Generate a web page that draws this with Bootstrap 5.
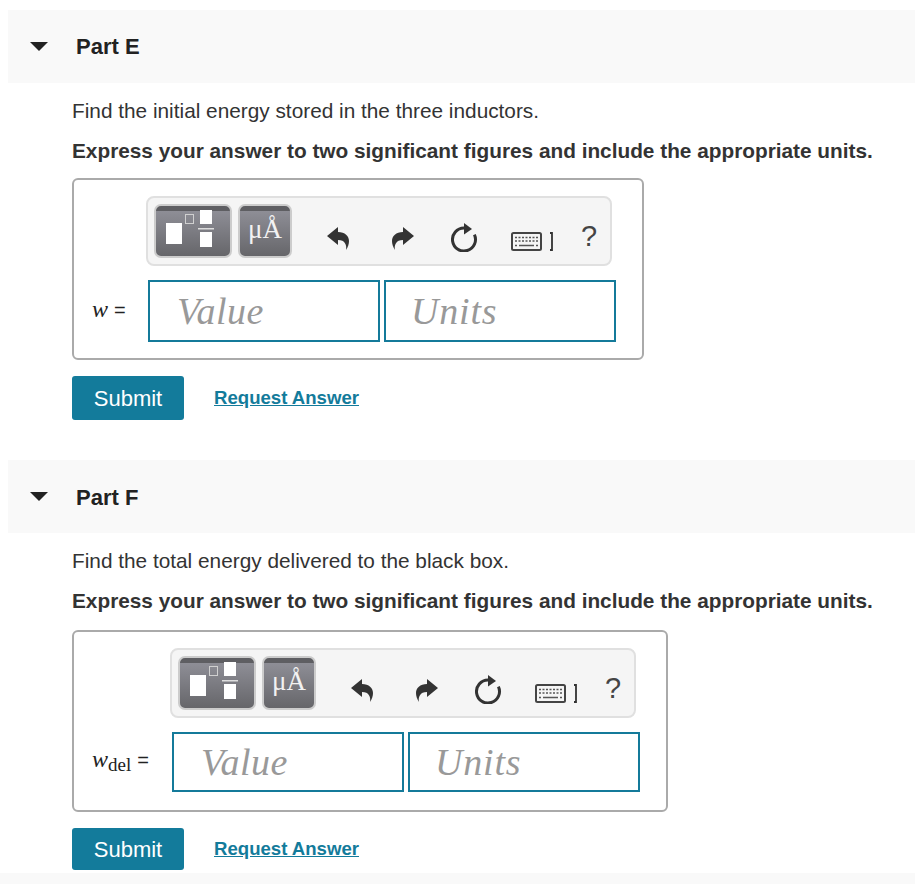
<!DOCTYPE html>
<html lang="en">
<head>
  <meta charset="UTF-8" />
  <meta name="viewport" content="width=device-width, initial-scale=1.0"/>
  <title>Part E and F</title>
  <link href="https://cdn.jsdelivr.net/npm/bootstrap@5.3.3/dist/css/bootstrap.min.css" rel="stylesheet"/>
  <style>
    body {
      font-family: "Liberation Sans", Arial, sans-serif;
      font-size: 20.8px;
      color: #333;
      background: #fff;
      padding: 10px 0 0 8px;
      margin: 0;
      overflow: hidden;
    }
    .part-head {
      height: 73px;
      background: #f9f9f9;
      padding-left: 22px;
    }
    .part-arrow {
      width: 0;
      height: 0;
      border-left: 9px solid transparent;
      border-right: 9px solid transparent;
      border-top: 9px solid #222;
      margin-right: 28px;
    }
    .part-title {
      font-size: 22px;
      font-weight: 700;
      color: #222;
    }
    .part-title.lower { padding-top: 2px; }
    .part-body { padding: 16px 0 0 64px; }
    .part-text { line-height: 24px; margin: 0 0 16px; }
    .part-ask { line-height: 24px; margin: 0 0 15px; font-weight: 700; }
    .part-ask.lower { margin-bottom: 17px; }
    .answer-box {
      border: 2px solid #aaa;
      border-radius: 6px;
      padding: 16px 26px 16px 18px;
      width: fit-content;
    }
    .answer-box.tall { padding-bottom: 18px; }
    .math-toolbar {
      position: relative;
      width: 466px;
      height: 70px;
      margin-bottom: 14px;
      padding: 6px 0 0 6px;
      border: 2px solid #e0e0e0;
      border-radius: 8px;
      background: #f5f5f5;
    }
    .bar-w { margin-left: 54px; }
    .bar-wdel { margin-left: 78px; }
    .tpl-btn {
      height: 54px;
      border: 2px solid #ccc;
      border-radius: 7px;
      background: linear-gradient(#5e5e62 0, #5e5e62 5px, #8e8e96 5px, #66666a 100%);
    }
    .tpl-frac { width: 78px; }
    .tpl-units {
      width: 54px;
      margin-left: 6px;
      color: #f2f2f2;
      font-family: "Liberation Serif", serif;
      font-size: 27px;
      line-height: 1;
      text-align: center;
      padding-top: 10px;
    }
    .tool-ico { position: absolute; display: block; }
    .tool-help {
      position: absolute;
      left: 433px;
      top: 24px;
      font-size: 29px;
      line-height: 1;
      color: #444;
    }
    .math-label {
      font-family: "Liberation Serif", serif;
      font-size: 19px;
      color: #222;
    }
    .math-label i { font-size: 24px; }
    .math-label sub { font-size: 19px; bottom: -4px; }
    .math-label span { font-family: "Liberation Sans", sans-serif; font-size: 20px; margin-left: 6px; }
    .label-w { width: 56px; padding-bottom: 4px; }
    .label-wdel { width: 80px; padding-bottom: 6px; }
    .math-field.form-control {
      width: 232px;
      height: 62px;
      border: 2px solid #147a9a;
      border-radius: 0;
      padding: 0 0 0 27px;
      font-family: "Liberation Serif", serif;
      font-style: italic;
      font-size: 38px;
      letter-spacing: .5px;
      box-shadow: none;
    }
    .math-field.units.form-control { padding-left: 25px; letter-spacing: .8px; }
    .math-field.short { height: 60px; }
    .math-field::placeholder { color: #999; opacity: 1; }
    .btn-submit.btn {
      width: 112px;
      height: 44px;
      padding: 0;
      font-size: 22px;
      background: #137b9b;
      border: 0;
      border-radius: 3px;
      color: #fff;
    }
    .btn-submit.short { height: 42px; }
    .req-link {
      font-size: 18.6px;
      font-weight: 700;
      color: #137b9b;
      margin-left: 30px;
    }
    .part-actions { margin-top: 16px; }
    .gap-e { height: 40px; }
    .foot-strip { height: 14px; margin-top: 3px; margin-left: -8px; background: #f9f9f9; }
  </style>
</head>
<body>

<svg width="0" height="0" class="position-absolute">
  <defs>
    <symbol id="ico-frac" viewBox="0 0 78 54">
      <rect x="12" y="19" width="16" height="21" fill="#fff"/>
      <rect x="31.500" y="10.500" width="8" height="9" fill="none" stroke="#d0d0d0"/>
      <rect x="46" y="6" width="12" height="14" fill="#fff"/>
      <rect x="44" y="24" width="16" height="1.500" fill="#ddd"/>
      <rect x="46" y="28" width="12" height="15" fill="#fff"/>
    </symbol>
    <symbol id="ico-undo" viewBox="0 0 22 25">
      <path d="M0 11 11 2V7C18 7 22 11 22 16 22 19 21 22 19 25 20 20 18 15 11 15V20Z" fill="#333"/>
    </symbol>
    <symbol id="ico-redo" viewBox="0 0 22 25">
      <path d="M22 11 11 2V7C4 7 0 11 0 16 0 19 1 22 3 25 2 20 4 15 11 15V20Z" fill="#333"/>
    </symbol>
    <symbol id="ico-reload" viewBox="0 0 28 30">
      <path d="M23.400 12.600A11.500 11.500 0 1 1 13 6" fill="none" stroke="#333" stroke-width="3"/>
      <path d="M13 1 21 7 13 12.500Z" fill="#333"/>
    </symbol>
    <symbol id="ico-keys" viewBox="0 0 44 20">
      <rect x="1" y="1" width="29" height="17" rx="1.500" fill="#f5f5f5" stroke="#444" stroke-width="2"/>
      <path d="M4 5.500H27M4 9H27" stroke="#555" stroke-width="1.500" stroke-dasharray="2 1.500"/>
      <path d="M4 13.500H6M8 13.500H23M25 13.500H27" stroke="#555" stroke-width="1.500"/>
      <path d="M39 1H41V18H39" fill="none" stroke="#333" stroke-width="1.800"/>
    </symbol>
  </defs>
</svg>

<section>
  <div class="part-head d-flex align-items-center">
    <span class="part-arrow"></span>
    <span class="part-title">Part E</span>
  </div>
  <div class="part-body">
    <p class="part-text">Find the initial energy stored in the three inductors.</p>
    <p class="part-ask">Express your answer to two significant figures and include the appropriate units.</p>
    <div class="answer-box">
      <div class="math-toolbar bar-w d-flex">
        <div class="tpl-btn tpl-frac"><svg width="74" height="50"><use href="#ico-frac" x="-2" y="-2" width="78" height="54"/></svg></div>
        <div class="tpl-btn tpl-units">μÅ</div>
        <svg class="tool-ico" style="left:179px;top:27px" width="22" height="25"><use href="#ico-undo"/></svg>
        <svg class="tool-ico" style="left:244px;top:27px" width="22" height="25"><use href="#ico-redo"/></svg>
        <svg class="tool-ico" style="left:303px;top:24px" width="28" height="30"><use href="#ico-reload"/></svg>
        <svg class="tool-ico" style="left:363px;top:34px" width="44" height="20"><use href="#ico-keys"/></svg>
        <span class="tool-help">?</span>
      </div>
      <div class="d-flex align-items-center">
        <div class="math-label label-w"><i>w</i><span>=</span></div>
        <input class="form-control math-field" placeholder="Value" aria-label="Value">
        <input class="form-control math-field units ms-1" placeholder="Units" aria-label="Units">
      </div>
    </div>
    <div class="part-actions d-flex align-items-center">
      <button class="btn btn-submit" type="button">Submit</button>
      <a class="req-link" href="#">Request Answer</a>
    </div>
  </div>
</section>

<div class="gap-e"></div>

<section>
  <div class="part-head d-flex align-items-center">
    <span class="part-arrow"></span>
    <span class="part-title lower">Part F</span>
  </div>
  <div class="part-body">
    <p class="part-text">Find the total energy delivered to the black box.</p>
    <p class="part-ask lower">Express your answer to two significant figures and include the appropriate units.</p>
    <div class="answer-box tall">
      <div class="math-toolbar bar-wdel d-flex">
        <div class="tpl-btn tpl-frac"><svg width="74" height="50"><use href="#ico-frac" x="-2" y="-2" width="78" height="54"/></svg></div>
        <div class="tpl-btn tpl-units">μÅ</div>
        <svg class="tool-ico" style="left:179px;top:27px" width="22" height="25"><use href="#ico-undo"/></svg>
        <svg class="tool-ico" style="left:244px;top:27px" width="22" height="25"><use href="#ico-redo"/></svg>
        <svg class="tool-ico" style="left:303px;top:24px" width="28" height="30"><use href="#ico-reload"/></svg>
        <svg class="tool-ico" style="left:363px;top:34px" width="44" height="20"><use href="#ico-keys"/></svg>
        <span class="tool-help">?</span>
      </div>
      <div class="d-flex align-items-center">
        <div class="math-label label-wdel"><i>w</i><sub>del</sub><span>=</span></div>
        <input class="form-control math-field short" placeholder="Value" aria-label="Value">
        <input class="form-control math-field units short ms-1" placeholder="Units" aria-label="Units">
      </div>
    </div>
    <div class="part-actions d-flex align-items-center">
      <button class="btn btn-submit short" type="button">Submit</button>
      <a class="req-link" href="#">Request Answer</a>
    </div>
  </div>
</section>
<div class="foot-strip"></div>

<script src="https://cdn.jsdelivr.net/npm/bootstrap@5.3.3/dist/js/bootstrap.bundle.min.js"></script>
</body>
</html>
